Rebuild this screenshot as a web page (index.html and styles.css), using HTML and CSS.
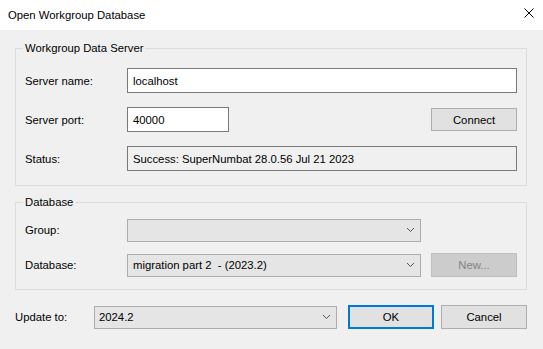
FILE: index.html
```html
<!DOCTYPE html>
<html>
<head>
	<title>Open Workgroup Database</title>
	<link rel="stylesheet" href="styles.css">
</head>
<body>
	<div class="dialog">
		<div class="titlebar">
			<span class="title">Open Workgroup Database</span>
			<svg class="close" width="10" height="10" viewBox="0 0 10 10">
				<path d="M0.5 0.5 L9.5 9.5 M9.5 0.5 L0.5 9.5" stroke="#000" stroke-width="1" fill="none"/>
			</svg>
		</div>

		<div class="content">
			<fieldset class="group">
				<legend>Workgroup Data Server</legend>
				<div class="row">
					<label class="label">Server name:</label>
					<input type="text" class="textbox grow" value="localhost">
				</div>
				<div class="row">
					<label class="label">Server port:</label>
					<input type="text" class="textbox port" value="40000">
					<span class="grow"></span>
					<button class="button">Connect</button>
				</div>
				<div class="row">
					<label class="label">Status:</label>
					<div class="textbox status grow">Success: SuperNumbat 28.0.56 Jul 21 2023</div>
				</div>
			</fieldset>

			<fieldset class="group group-db">
				<legend>Database</legend>
				<div class="row short">
					<label class="label">Group:</label>
					<div class="combo db-combo">
						<span></span>
						<svg width="7" height="4" viewBox="0 0 7 4"><path d="M0 0 L3.5 3.5 L7 0" stroke="#555" fill="none"/></svg>
					</div>
				</div>
				<div class="row short">
					<label class="label">Database:</label>
					<div class="combo db-combo">
						<span>migration part 2&nbsp; - (2023.2)</span>
						<svg width="7" height="4" viewBox="0 0 7 4"><path d="M0 0 L3.5 3.5 L7 0" stroke="#555" fill="none"/></svg>
					</div>
					<button class="button disabled" disabled>New...</button>
				</div>
			</fieldset>

			<div class="footer">
				<label class="label update-label">Update to:</label>
				<div class="combo update-combo">
					<span>2024.2</span>
					<svg width="7" height="4" viewBox="0 0 7 4"><path d="M0 0 L3.5 3.5 L7 0" stroke="#555" fill="none"/></svg>
				</div>
				<button class="button default">OK</button>
				<button class="button cancel">Cancel</button>
			</div>
		</div>
	</div>
</body>
</html>
```

FILE: styles.css
```css
body {
	margin: 0;
	font-family: "Liberation Sans", Arial, sans-serif;
	font-size: 11.3px;
	color: #000;
}

.dialog {
	width: 543px;
	height: 349px;
	background-color: #f0f0f0;
}

.titlebar {
	height: 30px;
	display: flex;
	align-items: center;
	justify-content: space-between;
	padding: 0 9px 0 8px;
	background-color: #fff;
}

.close {
	margin-bottom: 4px;
}

.content {
	padding: 10px 16px 0 15px;
}

.group {
	margin: 0;
	padding: 12px 9px 14px 9px;
	border: 1px solid #dcdcdc;
}

.group legend {
	padding: 0 2px;
	margin-left: -2px;
	line-height: 16px;
}

.group-db {
	margin-top: 8px;
	padding-top: 8px;
	padding-bottom: 12px;
}

.row {
	display: flex;
	align-items: center;
	height: 25px;
	margin-bottom: 14px;
}

.row:last-child {
	margin-bottom: 0;
}

.row.short {
	height: 24px;
	margin-bottom: 11px;
}

.row.short:last-child {
	margin-bottom: 0;
}

.label {
	width: 102px;
	flex-shrink: 0;
}

.grow {
	flex: 1;
}

.textbox {
	box-sizing: border-box;
	height: 25px;
	padding: 0 5px;
	border: 1px solid #7a7a7a;
	background-color: #fff;
	font: inherit;
	color: #000;
	outline: none;
}

.port {
	width: 102px;
}

.status {
	display: flex;
	align-items: center;
	background-color: #f0f0f0;
}

.button {
	box-sizing: border-box;
	width: 86px;
	height: 23px;
	padding: 0;
	border: 1px solid #adadad;
	background-color: #e1e1e1;
	font: inherit;
	color: #000;
}

.button.disabled {
	height: 24px;
	margin-left: 10px;
	border-color: #bfbfbf;
	background-color: #cccccc;
	color: #838383;
}

.button.default {
	height: 24px;
	margin-left: 11px;
	border: 2px solid #0078d7;
}

.button.cancel {
	height: 24px;
	margin-left: 7px;
}

.combo {
	box-sizing: border-box;
	height: 23px;
	display: flex;
	align-items: center;
	justify-content: space-between;
	padding: 0 6px 0 5px;
	border: 1px solid #adadad;
	background-color: #e5e5e5;
}

.db-combo {
	width: 294px;
}

.footer {
	display: flex;
	align-items: center;
	margin-top: 15px;
}

.update-label {
	width: 79px;
}

.update-combo {
	width: 243px;
	padding-left: 4px;
}
```
